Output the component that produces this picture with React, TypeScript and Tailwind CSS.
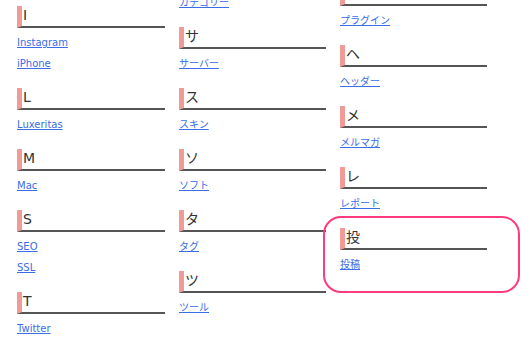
import React from "react";

type Section = { h: string; links: string[] };

const col1: Section[] = [
  { h: "I", links: ["Instagram", "iPhone"] },
  { h: "L", links: ["Luxeritas"] },
  { h: "M", links: ["Mac"] },
  { h: "S", links: ["SEO", "SSL"] },
  { h: "T", links: ["Twitter"] },
];
const col2: Section[] = [
  { h: "カ", links: ["カテゴリー"] },
  { h: "サ", links: ["サーバー"] },
  { h: "ス", links: ["スキン"] },
  { h: "ソ", links: ["ソフト"] },
  { h: "タ", links: ["タグ"] },
  { h: "ツ", links: ["ツール"] },
];
const col3: Section[] = [
  { h: "フ", links: ["プラグイン"] },
  { h: "ヘ", links: ["ヘッダー"] },
  { h: "メ", links: ["メルマガ"] },
  { h: "レ", links: ["レポート"] },
  { h: "投", links: ["投稿"] },
];

function Block({ s }: { s: Section }) {
  return (
    <div className="flex flex-col mb-[14px]">
      <h3 className="h-[22px] border-l-[5px] border-l-[#f09b97] border-b-2 border-b-[#555] pl-[1px] pb-[2px] text-[14px] leading-[18px] text-[#333] font-normal">
        {s.h}
      </h3>
      <ul className="mt-[4px] flex flex-col">
        {s.links.map((l) => (
          <li key={l} className="h-[21px] leading-[21px] text-[10px]">
            <a href="#" className="text-[#3a6de6] underline">
              {l}
            </a>
          </li>
        ))}
      </ul>
    </div>
  );
}

export default function App() {
  return (
    <div
      className="relative w-[530px] h-[350px] overflow-hidden bg-white"
      style={{ fontFamily: '"DejaVu Sans", "Noto Sans CJK JP", sans-serif' }}
    >
      <div className="flex gap-[14px] pl-[17px]">
        <div className="w-[148px] flex flex-col mt-[6px]">
          {col1.map((s) => (
            <Block key={s.h} s={s} />
          ))}
        </div>
        <div className="w-[147px] flex flex-col mt-[-34px]">
          {col2.map((s) => (
            <Block key={s.h} s={s} />
          ))}
        </div>
        <div className="w-[147px] flex flex-col mt-[-16px]">
          {col3.map((s) => (
            <Block key={s.h} s={s} />
          ))}
        </div>
      </div>
      <div className="absolute left-[323px] top-[216px] w-[197px] h-[77px] border-2 border-[#ff3b7b] rounded-[18px] pointer-events-none" />
    </div>
  );
}
